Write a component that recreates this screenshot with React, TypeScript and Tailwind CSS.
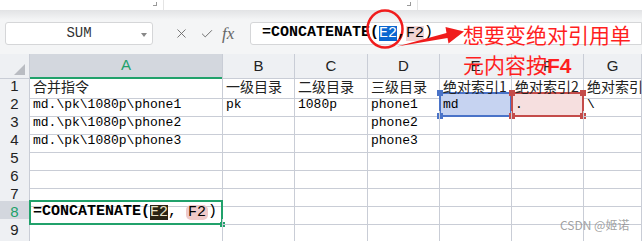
import { X, Check } from 'lucide-react';

const cols = 'grid grid-cols-[30px_193px_72px_73px_72px_72px_72px_58px]';
const mono = { fontFamily: '"Liberation Mono", "Noto Sans CJK SC", monospace' };
const cjk = { fontFamily: '"Noto Sans CJK SC", "Liberation Sans", sans-serif' };

const rows: string[][] = [
    ['合并指令', '一级目录', '二级目录', '三级目录', '绝对索引1', '绝对索引2', '绝对索引3'],
    ['md.\\pk\\1080p\\phone1', 'pk', '1080p', 'phone1', 'md', '.', '\\'],
    ['md.\\pk\\1080p\\phone2', '', '', 'phone2', '', '', ''],
    ['md.\\pk\\1080p\\phone3', '', '', 'phone3', '', '', ''],
    ['', '', '', '', '', '', ''],
    ['', '', '', '', '', '', ''],
    ['', '', '', '', '', '', ''],
    ['', '', '', '', '', '', ''],
    ['', '', '', '', '', '', ''],
];

const Handle = ({ className }: { className: string }) => (
    <span className={`absolute w-[6px] h-[6px] ${className}`} />
);

export default function App() {
    return (
        <div className="relative w-[642px] h-[241px] overflow-hidden bg-white text-black" style={cjk}>
            {/* top strip */}
            <div className="h-[10px] flex bg-white">
                <div className="w-[164px] border-r border-[#e4e4e4] relative">
                    <span className="absolute right-[6px] top-[2px] w-[4px] h-[4px] border-r border-b border-[#999]" />
                </div>
                <div className="w-[254px] border-r border-[#e4e4e4] relative">
                    <span className="absolute right-[6px] top-[2px] w-[4px] h-[4px] border-r border-b border-[#999]" />
                </div>
            </div>
            <div className="h-[10px] bg-gradient-to-b from-[#e2e3e5] to-[#f4f5f6]" />

            {/* toolbar */}
            <div className="h-[34px] bg-[#f4f5f6] flex items-start pt-[2px]">
                <div className="ml-[5px] w-[148px] h-[23px] bg-white border border-[#d5d6d8] rounded-[3px] flex items-center relative">
                    <span className="flex-1 text-center text-[14px] text-[#333]" style={mono}>SUM</span>
                    <span className="absolute right-[5px] top-[10px] border-x-[3px] border-x-transparent border-t-[4px] border-t-[#888]" />
                </div>
                <div className="w-[97px] h-[23px] flex items-center text-[#666]">
                    <X className="ml-[21px] w-[15px] h-[15px]" strokeWidth={1.4} />
                    <Check className="ml-[11px] w-[14px] h-[14px]" strokeWidth={1.6} />
                    <span className="ml-[8px] text-[17px] italic leading-none" style={{ fontFamily: '"Liberation Serif", serif' }}>
                        fx
                    </span>
                </div>
                <div className="flex-1 h-[23px] bg-white border border-[#d5d6d8] rounded-l-[3px] flex items-center pl-[11px] pb-[1px] text-[15px]" style={mono}>
                    <span className="font-bold">=CONCATENATE(</span>
                    <span className="bg-[#0b67d0] text-white leading-[15px]">E2</span>
                    <span className="relative z-[2]">,</span>
                    <span className="bg-[#f0d4d4] leading-[15px]">F2</span>
                    <span>)</span>
                </div>
            </div>

            {/* column header */}
            <div className={`${cols} h-[21px] text-[15px]`} style={{ fontFamily: '"Liberation Sans", sans-serif' }}>
                <div className="bg-[#eef0f3] border-r border-b border-[#c9cdd6] relative">
                    <span className="absolute right-[4px] bottom-[3px] border-l-[11px] border-l-transparent border-b-[11px] border-b-[#b9bcc2]" />
                </div>
                <div className="bg-[#d3d7de] border-r border-[#c9cdd6] border-b-2 border-b-[#21a16b] text-[#21a16b] flex items-center justify-center">A</div>
                {['B', 'C', 'D', 'E', 'F', 'G'].map((c) => (
                    <div key={c} className="bg-[#eef0f3] border-r border-b border-[#c9cdd6] flex items-center justify-center text-[#222]">
                        {c}
                    </div>
                ))}
            </div>

            {/* rows */}
            {rows.map((r, i) => {
                const n = i + 1;
                const active = n === 8;
                return (
                    <div key={n} className={`${cols} h-[18px]`}>
                        <div
                            className={`border-r border-b border-[#c9cdd6] flex items-center justify-center text-[15px] ${
                                active ? 'bg-[#d3d7de] text-[#21a16b]' : 'bg-[#eef0f3] text-[#222]'
                            }`}
                            style={{ fontFamily: '"Liberation Sans", sans-serif' }}
                        >
                            {n}
                        </div>
                        {r.map((v, j) => {
                            const isE2 = n === 2 && j === 4;
                            const isF2 = n === 2 && j === 5;
                            const ascii = /^[\x00-\x7f]*$/.test(v);
                            return (
                                <div
                                    key={j}
                                    className={`relative border-r border-b border-[#c9cdd6] flex items-center pl-[3px] whitespace-nowrap overflow-visible ${
                                        ascii ? 'text-[13px]' : 'text-[14px] text-[#222]'
                                    } ${isE2 ? 'bg-[#c6d3f1]' : ''} ${isF2 ? 'bg-[#f6dfdf]' : ''}`}
                                    style={ascii ? mono : cjk}
                                >
                                    <span className="relative z-[1]">{v}</span>
                                    {isE2 && (
                                        <>
                                            <span className="absolute inset-[-1px] border-2 border-[#4a73c8]" />
                                            <Handle className="bg-[#4a73c8] -left-[3px] -top-[3px]" />
                                            <Handle className="bg-[#4a73c8] -left-[3px] -bottom-[3px]" />
                                        </>
                                    )}
                                    {isF2 && (
                                        <>
                                            <span className="absolute inset-[-1px] border-2 border-[#c44c4a]" />
                                            <Handle className="bg-[#c44c4a] -left-[3px] -top-[3px]" />
                                            <Handle className="bg-[#c44c4a] -left-[3px] -bottom-[3px]" />
                                            <Handle className="bg-[#c44c4a] -right-[3px] -top-[3px]" />
                                            <Handle className="bg-[#c44c4a] -right-[3px] -bottom-[3px]" />
                                        </>
                                    )}
                                    {active && j === 0 && (
                                        <>
                                            <span className="absolute inset-[-1px] border-2 border-[#21a16b]" />
                                            <span className="absolute left-[3px] top-0 bottom-0 flex items-center text-[15px] z-[1]" style={mono}>
                                                <span className="font-bold">=CONCATENATE(</span>
                                                <span className="bg-[#2a2414] text-[#e8e2c8] leading-[15px]">E2</span>
                                                <span>,&nbsp;</span>
                                                <span className="bg-[#efc9c9] rounded-[5px] px-[2px] leading-[15px]">F2</span>
                                                <span>)</span>
                                            </span>
                                            <span className="absolute -right-[3px] -bottom-[3px] w-[5px] h-[5px] bg-[#21a16b]" />
                                        </>
                                    )}
                                </div>
                            );
                        })}
                    </div>
                );
            })}

            {/* annotation */}
            <svg className="absolute inset-0 pointer-events-none" width="642" height="241">
                <ellipse cx="385" cy="29" rx="17.5" ry="18.5" fill="none" stroke="#f01c1c" strokeWidth="2.5" />
                <polygon points="397,46.5 446.5,33 445.5,27 464,31.5 448.5,43.5 447.5,38" fill="#f01c1c" />
            </svg>
            <div className="absolute left-[463px] top-[19px] text-[21px] leading-[30px] text-[#ff1f1f] pointer-events-none" style={cjk}>
                <div>想要变绝对引用单</div>
                <div>
                    元内容按<span className="font-bold" style={{ fontFamily: '"Liberation Sans", sans-serif' }}>F4</span>
                </div>
            </div>

            <div className="absolute left-[560px] top-[216px] text-[12px] text-[#8a8a8a]/80" style={cjk}>
                CSDN @姬诺
            </div>
        </div>
    );
}
